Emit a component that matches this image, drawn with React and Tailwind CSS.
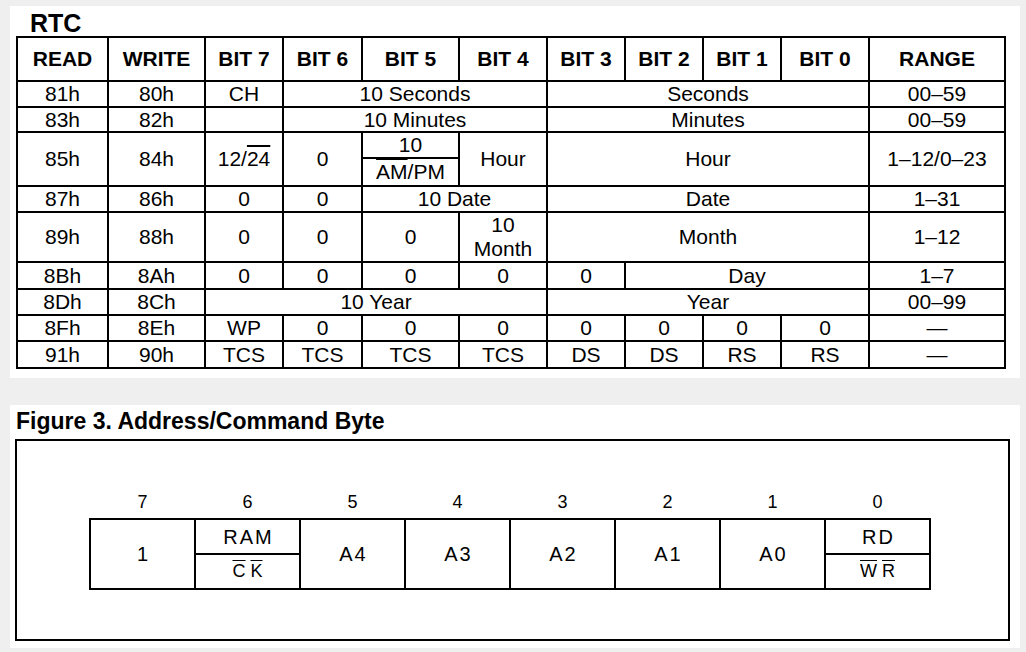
import React from "react";

const font = { fontFamily: '"Liberation Sans", Arial, sans-serif' };

function Cell({ children, className = "" }) {
  return (
    <div className={"bg-white flex items-center justify-center text-center leading-[24px] " + className}>
      {children}
    </div>
  );
}

function Head({ children }) {
  return <Cell className="font-bold">{children}</Cell>;
}

const heads = ["READ", "WRITE", "BIT 7", "BIT 6", "BIT 5", "BIT 4", "BIT 3", "BIT 2", "BIT 1", "BIT 0", "RANGE"];

function RtcTable() {
  return (
    <div className="grid w-fit grid-cols-[89px_95px_76px_77px_95px_86px_76px_76px_76px_86px_134px] grid-rows-[42px_24px_23px_52px_24px_48px_25px_24px_24px_25px] gap-[2px] bg-black p-[2px] text-[21px] text-black">
      {heads.map((h) => (
        <Head key={h}>{h}</Head>
      ))}

      {/* 81h */}
      <Cell>81h</Cell>
      <Cell>80h</Cell>
      <Cell>CH</Cell>
      <Cell className="col-span-3">10 Seconds</Cell>
      <Cell className="col-span-4">Seconds</Cell>
      <Cell>00–59</Cell>

      {/* 83h */}
      <Cell>83h</Cell>
      <Cell>82h</Cell>
      <Cell></Cell>
      <Cell className="col-span-3">10 Minutes</Cell>
      <Cell className="col-span-4">Minutes</Cell>
      <Cell>00–59</Cell>

      {/* 85h */}
      <Cell>85h</Cell>
      <Cell>84h</Cell>
      <Cell>
        12/<span className="overline">24</span>
      </Cell>
      <Cell>0</Cell>
      <div className="flex flex-col gap-[2px] bg-black">
        <Cell className="h-[24px]">10</Cell>
        <Cell className="flex-1">
          <span className="overline">AM</span>/PM
        </Cell>
      </div>
      <Cell>Hour</Cell>
      <Cell className="col-span-4">Hour</Cell>
      <Cell>1–12/0–23</Cell>

      {/* 87h */}
      <Cell>87h</Cell>
      <Cell>86h</Cell>
      <Cell>0</Cell>
      <Cell>0</Cell>
      <Cell className="col-span-2">10 Date</Cell>
      <Cell className="col-span-4">Date</Cell>
      <Cell>1–31</Cell>

      {/* 89h */}
      <Cell>89h</Cell>
      <Cell>88h</Cell>
      <Cell>0</Cell>
      <Cell>0</Cell>
      <Cell>0</Cell>
      <Cell>
        10
        <br />
        Month
      </Cell>
      <Cell className="col-span-4">Month</Cell>
      <Cell>1–12</Cell>

      {/* 8Bh */}
      <Cell>8Bh</Cell>
      <Cell>8Ah</Cell>
      <Cell>0</Cell>
      <Cell>0</Cell>
      <Cell>0</Cell>
      <Cell>0</Cell>
      <Cell>0</Cell>
      <Cell className="col-span-3">Day</Cell>
      <Cell>1–7</Cell>

      {/* 8Dh */}
      <Cell>8Dh</Cell>
      <Cell>8Ch</Cell>
      <Cell className="col-span-4">10 Year</Cell>
      <Cell className="col-span-4">Year</Cell>
      <Cell>00–99</Cell>

      {/* 8Fh */}
      <Cell>8Fh</Cell>
      <Cell>8Eh</Cell>
      <Cell>WP</Cell>
      {[0, 1, 2, 3, 4, 5, 6].map((i) => (
        <Cell key={i}>0</Cell>
      ))}
      <Cell>—</Cell>

      {/* 91h */}
      <Cell>91h</Cell>
      <Cell>90h</Cell>
      {["TCS", "TCS", "TCS", "TCS", "DS", "DS", "RS", "RS"].map((t, i) => (
        <Cell key={i}>{t}</Cell>
      ))}
      <Cell>—</Cell>
    </div>
  );
}

function BitBox({ children }) {
  return <div className="bg-white flex items-center justify-center text-[20px] tracking-[2px] pl-[2px]">{children}</div>;
}

// lower half carries an active-low name, overline spans both letters
function SplitBox({ top, bottom }) {
  return (
    <div className="flex flex-col gap-[2px] bg-black">
      <div className="h-[33px] bg-white flex items-center justify-center text-[20px] tracking-[2px] pl-[2px]">{top}</div>
      <div className="flex-1 bg-white flex items-center justify-center text-[18px]">
        <span className="overline">
          {bottom[0]}
          <span className="ml-[5px]">{bottom[1]}</span>
        </span>
      </div>
    </div>
  );
}

function AddressFigure() {
  return (
    <div className="mt-[5px] ml-[5px] w-[995px] h-[202px] border-2 border-black pt-[50px] pl-[72px]">
      <div className="grid w-fit grid-cols-[repeat(8,103px)] gap-[2px] px-[2px] h-[22px] text-[18px] leading-[22px] text-center">
        {[7, 6, 5, 4, 3, 2, 1, 0].map((n) => (
          <div key={n}>{n}</div>
        ))}
      </div>
      <div className="mt-[5px] grid w-fit grid-cols-[repeat(8,103px)] grid-rows-[68px] gap-[2px] bg-black p-[2px]">
        <BitBox>1</BitBox>
        <SplitBox top="RAM" bottom="CK" />
        <BitBox>A4</BitBox>
        <BitBox>A3</BitBox>
        <BitBox>A2</BitBox>
        <BitBox>A1</BitBox>
        <BitBox>A0</BitBox>
        <SplitBox top="RD" bottom="WR" />
      </div>
    </div>
  );
}

export default function App() {
  return (
    <div style={font} className="w-[1026px] h-[652px] bg-[#efefef] pt-[6px] pl-[10px] text-black overflow-hidden">
      <div className="w-[1010px] h-[372px] bg-white pt-[4px] pl-[6px]">
        <div className="h-[26px] leading-[26px] pl-[14px] text-[25px] font-bold">RTC</div>
        <RtcTable />
      </div>
      <div className="mt-[27px] w-[1010px] h-[243px] bg-white pt-[3px]">
        <div className="h-[26px] leading-[26px] pl-[6px] text-[23px] font-bold">Figure 3. Address/Command Byte</div>
        <AddressFigure />
      </div>
    </div>
  );
}
